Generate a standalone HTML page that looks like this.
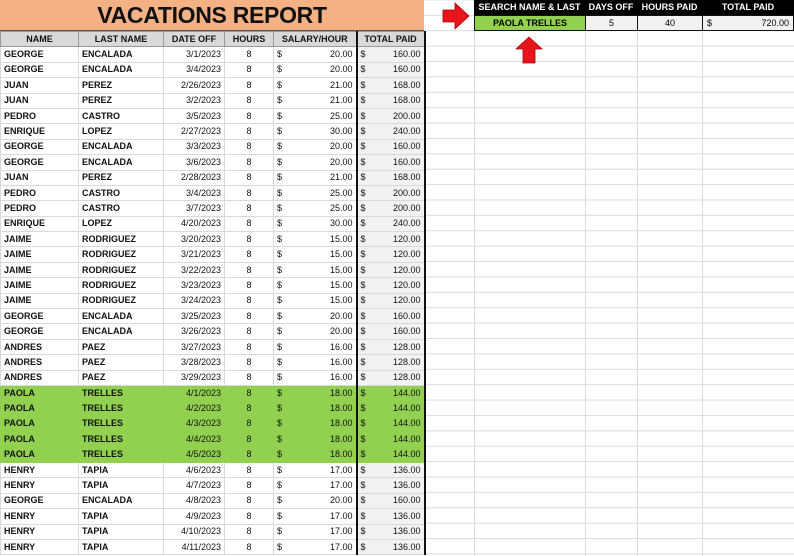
<!DOCTYPE html>
<html><head><meta charset="utf-8"><style>
*{margin:0;padding:0;box-sizing:border-box}
body{width:794px;height:556px;overflow:hidden;background:#fff;font-family:"Liberation Sans",Arial,sans-serif;position:relative}
.grid{position:absolute;left:424px;top:0;width:370px;height:556px;
background-image:linear-gradient(#dcdcdc 1px,transparent 1px);background-size:100% 15.4px;background-position:0 14.8px}
.vl{position:absolute;top:0;height:556px;width:1px;background:#dcdcdc}
.title{position:absolute;left:0;top:0;width:424px;height:31px;background:#f4b183;border-bottom:1px solid #555;text-align:center;font-weight:bold;font-size:23px;line-height:31px;color:#111;letter-spacing:-0.3px}
table{position:absolute;left:0;top:31px;border-collapse:collapse;table-layout:fixed;width:424px;font-size:9px;color:#111}
td,th{height:15.4px;border:1px solid #d9d9d9;padding:0 3px;white-space:nowrap;overflow:hidden;line-height:13px}
th{background:#d9d9d9;border-color:#999;font-weight:bold;text-align:center}
td.n{font-weight:bold}
td.r{text-align:right}
td.c{text-align:center}
td.m span{float:left}
td.m{text-align:right}
td.t{background:#f2f2f2;border-left:2px solid #111;border-right:2px solid #111}
th.t{border-left:2px solid #111;border-right:2px solid #111}
tr.g td{background:#92d050;border-color:#92d050}
tr.g td.t{border-left:2px solid #111;border-right:2px solid #111}
.sh{position:absolute;top:0;height:15px;background:#000;color:#fff;font-weight:bold;font-size:9px;line-height:15px;text-align:center}
.sv{position:absolute;top:15px;height:16px;border:1px solid #111;background:#fff;font-size:9px;line-height:14px;text-align:center;font-weight:bold}
</style></head><body>
<div class="grid"></div>
<div class="vl" style="left:474px"></div>
<div class="vl" style="left:585px"></div>
<div class="vl" style="left:637px"></div>
<div class="vl" style="left:702px"></div>
<div class="title">VACATIONS REPORT</div>
<table>
<colgroup><col style="width:78px"><col style="width:85px"><col style="width:61px"><col style="width:49px"><col style="width:83px"><col style="width:68px"></colgroup>
<tr><th>NAME</th><th>LAST NAME</th><th>DATE OFF</th><th>HOURS</th><th>SALARY/HOUR</th><th class="t">TOTAL PAID</th></tr>
<tr><td class="n">GEORGE</td><td class="n">ENCALADA</td><td class="r">3/1/2023</td><td class="c">8</td><td class="m"><span>$</span>20.00</td><td class="m t"><span>$</span>160.00</td></tr>
<tr><td class="n">GEORGE</td><td class="n">ENCALADA</td><td class="r">3/4/2023</td><td class="c">8</td><td class="m"><span>$</span>20.00</td><td class="m t"><span>$</span>160.00</td></tr>
<tr><td class="n">JUAN</td><td class="n">PEREZ</td><td class="r">2/26/2023</td><td class="c">8</td><td class="m"><span>$</span>21.00</td><td class="m t"><span>$</span>168.00</td></tr>
<tr><td class="n">JUAN</td><td class="n">PEREZ</td><td class="r">3/2/2023</td><td class="c">8</td><td class="m"><span>$</span>21.00</td><td class="m t"><span>$</span>168.00</td></tr>
<tr><td class="n">PEDRO</td><td class="n">CASTRO</td><td class="r">3/5/2023</td><td class="c">8</td><td class="m"><span>$</span>25.00</td><td class="m t"><span>$</span>200.00</td></tr>
<tr><td class="n">ENRIQUE</td><td class="n">LOPEZ</td><td class="r">2/27/2023</td><td class="c">8</td><td class="m"><span>$</span>30.00</td><td class="m t"><span>$</span>240.00</td></tr>
<tr><td class="n">GEORGE</td><td class="n">ENCALADA</td><td class="r">3/3/2023</td><td class="c">8</td><td class="m"><span>$</span>20.00</td><td class="m t"><span>$</span>160.00</td></tr>
<tr><td class="n">GEORGE</td><td class="n">ENCALADA</td><td class="r">3/6/2023</td><td class="c">8</td><td class="m"><span>$</span>20.00</td><td class="m t"><span>$</span>160.00</td></tr>
<tr><td class="n">JUAN</td><td class="n">PEREZ</td><td class="r">2/28/2023</td><td class="c">8</td><td class="m"><span>$</span>21.00</td><td class="m t"><span>$</span>168.00</td></tr>
<tr><td class="n">PEDRO</td><td class="n">CASTRO</td><td class="r">3/4/2023</td><td class="c">8</td><td class="m"><span>$</span>25.00</td><td class="m t"><span>$</span>200.00</td></tr>
<tr><td class="n">PEDRO</td><td class="n">CASTRO</td><td class="r">3/7/2023</td><td class="c">8</td><td class="m"><span>$</span>25.00</td><td class="m t"><span>$</span>200.00</td></tr>
<tr><td class="n">ENRIQUE</td><td class="n">LOPEZ</td><td class="r">4/20/2023</td><td class="c">8</td><td class="m"><span>$</span>30.00</td><td class="m t"><span>$</span>240.00</td></tr>
<tr><td class="n">JAIME</td><td class="n">RODRIGUEZ</td><td class="r">3/20/2023</td><td class="c">8</td><td class="m"><span>$</span>15.00</td><td class="m t"><span>$</span>120.00</td></tr>
<tr><td class="n">JAIME</td><td class="n">RODRIGUEZ</td><td class="r">3/21/2023</td><td class="c">8</td><td class="m"><span>$</span>15.00</td><td class="m t"><span>$</span>120.00</td></tr>
<tr><td class="n">JAIME</td><td class="n">RODRIGUEZ</td><td class="r">3/22/2023</td><td class="c">8</td><td class="m"><span>$</span>15.00</td><td class="m t"><span>$</span>120.00</td></tr>
<tr><td class="n">JAIME</td><td class="n">RODRIGUEZ</td><td class="r">3/23/2023</td><td class="c">8</td><td class="m"><span>$</span>15.00</td><td class="m t"><span>$</span>120.00</td></tr>
<tr><td class="n">JAIME</td><td class="n">RODRIGUEZ</td><td class="r">3/24/2023</td><td class="c">8</td><td class="m"><span>$</span>15.00</td><td class="m t"><span>$</span>120.00</td></tr>
<tr><td class="n">GEORGE</td><td class="n">ENCALADA</td><td class="r">3/25/2023</td><td class="c">8</td><td class="m"><span>$</span>20.00</td><td class="m t"><span>$</span>160.00</td></tr>
<tr><td class="n">GEORGE</td><td class="n">ENCALADA</td><td class="r">3/26/2023</td><td class="c">8</td><td class="m"><span>$</span>20.00</td><td class="m t"><span>$</span>160.00</td></tr>
<tr><td class="n">ANDRES</td><td class="n">PAEZ</td><td class="r">3/27/2023</td><td class="c">8</td><td class="m"><span>$</span>16.00</td><td class="m t"><span>$</span>128.00</td></tr>
<tr><td class="n">ANDRES</td><td class="n">PAEZ</td><td class="r">3/28/2023</td><td class="c">8</td><td class="m"><span>$</span>16.00</td><td class="m t"><span>$</span>128.00</td></tr>
<tr><td class="n">ANDRES</td><td class="n">PAEZ</td><td class="r">3/29/2023</td><td class="c">8</td><td class="m"><span>$</span>16.00</td><td class="m t"><span>$</span>128.00</td></tr>
<tr class="g"><td class="n">PAOLA</td><td class="n">TRELLES</td><td class="r">4/1/2023</td><td class="c">8</td><td class="m"><span>$</span>18.00</td><td class="m t"><span>$</span>144.00</td></tr>
<tr class="g"><td class="n">PAOLA</td><td class="n">TRELLES</td><td class="r">4/2/2023</td><td class="c">8</td><td class="m"><span>$</span>18.00</td><td class="m t"><span>$</span>144.00</td></tr>
<tr class="g"><td class="n">PAOLA</td><td class="n">TRELLES</td><td class="r">4/3/2023</td><td class="c">8</td><td class="m"><span>$</span>18.00</td><td class="m t"><span>$</span>144.00</td></tr>
<tr class="g"><td class="n">PAOLA</td><td class="n">TRELLES</td><td class="r">4/4/2023</td><td class="c">8</td><td class="m"><span>$</span>18.00</td><td class="m t"><span>$</span>144.00</td></tr>
<tr class="g"><td class="n">PAOLA</td><td class="n">TRELLES</td><td class="r">4/5/2023</td><td class="c">8</td><td class="m"><span>$</span>18.00</td><td class="m t"><span>$</span>144.00</td></tr>
<tr><td class="n">HENRY</td><td class="n">TAPIA</td><td class="r">4/6/2023</td><td class="c">8</td><td class="m"><span>$</span>17.00</td><td class="m t"><span>$</span>136.00</td></tr>
<tr><td class="n">HENRY</td><td class="n">TAPIA</td><td class="r">4/7/2023</td><td class="c">8</td><td class="m"><span>$</span>17.00</td><td class="m t"><span>$</span>136.00</td></tr>
<tr><td class="n">GEORGE</td><td class="n">ENCALADA</td><td class="r">4/8/2023</td><td class="c">8</td><td class="m"><span>$</span>20.00</td><td class="m t"><span>$</span>160.00</td></tr>
<tr><td class="n">HENRY</td><td class="n">TAPIA</td><td class="r">4/9/2023</td><td class="c">8</td><td class="m"><span>$</span>17.00</td><td class="m t"><span>$</span>136.00</td></tr>
<tr><td class="n">HENRY</td><td class="n">TAPIA</td><td class="r">4/10/2023</td><td class="c">8</td><td class="m"><span>$</span>17.00</td><td class="m t"><span>$</span>136.00</td></tr>
<tr><td class="n">HENRY</td><td class="n">TAPIA</td><td class="r">4/11/2023</td><td class="c">8</td><td class="m"><span>$</span>17.00</td><td class="m t"><span>$</span>136.00</td></tr>
</table>

<div class="sh" style="left:474px;width:111px">SEARCH NAME &amp; LAST</div>
<div class="sh" style="left:585px;width:52px">DAYS OFF</div>
<div class="sh" style="left:637px;width:65px">HOURS PAID</div>
<div class="sh" style="left:702px;width:92px">TOTAL PAID</div>
<div class="sv" style="left:474px;width:112px;background:#92d050">PAOLA TRELLES</div>
<div class="sv" style="left:585px;width:53px;background:#f2f2f2;font-weight:normal">5</div>
<div class="sv" style="left:637px;width:66px;background:#f2f2f2;font-weight:normal">40</div>
<div class="sv" style="left:702px;width:92px;background:#f2f2f2;font-weight:normal;text-align:right;padding:0 4px"><span style="float:left">$</span>720.00</div>

<svg style="position:absolute;left:442px;top:2px" width="28" height="28" viewBox="0 0 28 28"><path d="M1 8 H13 V1 L27 14 L13 27 V20 H1 Z" fill="#e8141c" stroke="#a00" stroke-width="0.8"/></svg>
<svg style="position:absolute;left:515px;top:36px" width="28" height="28" viewBox="0 0 28 28"><path d="M14 1 L27 13 H20 V27 H8 V13 H1 Z" fill="#e8141c" stroke="#a00" stroke-width="0.8"/></svg>
</body></html>
